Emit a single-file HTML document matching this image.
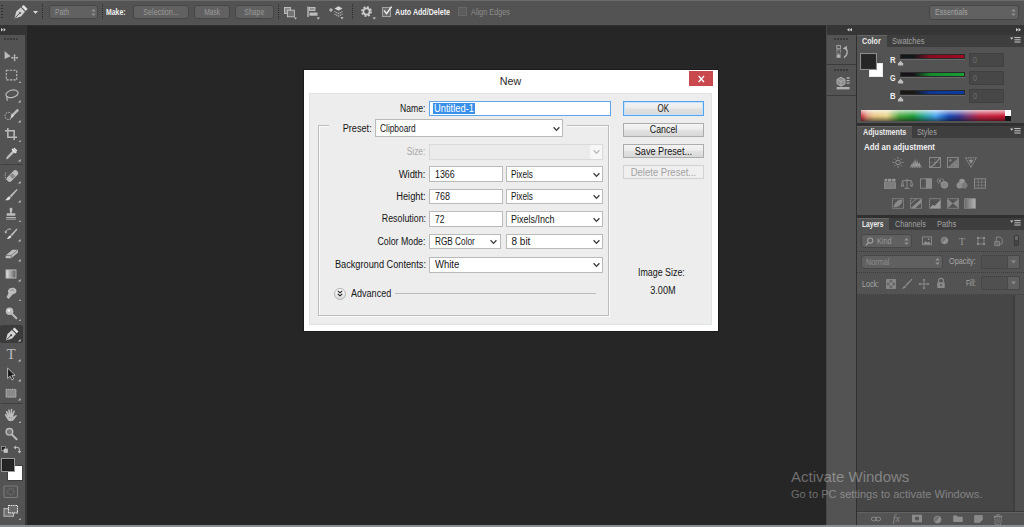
<!DOCTYPE html>
<html lang="en">
<head>
<meta charset="utf-8">
<title>New</title>
<style>
html,body{margin:0;padding:0;}
body{width:1024px;height:527px;overflow:hidden;background:#262626;position:relative;font-family:"Liberation Sans",sans-serif;font-size:9px;color:#d6d6d6;}
.abs{position:absolute;}
div,span{box-sizing:border-box;}
.t{white-space:pre;display:block;}
.dot{background-image:radial-gradient(circle at 1px 1px,rgba(255,255,255,.10) .6px,transparent .9px);background-size:3px 3px;}
</style>
</head>
<body>
<!-- app chrome -->
<div class="abs" style="left:0px;top:0px;width:1024px;height:24.5px;background:#535353;border-top:1px solid #6b6b6b;"></div>
<div class="abs" style="left:0px;top:24.5px;width:1024px;height:0.5px;background:#303030;"></div>
<div class="abs" style="left:0px;top:25px;width:25.2px;height:500px;background:#535353;"></div>
<div class="abs" style="left:25.2px;top:25px;width:1.8px;height:500px;background:#363636;"></div>
<div class="abs" style="left:0px;top:25px;width:27px;height:9.6px;background:#343434;"></div>
<div class="abs" style="left:825.5px;top:25px;width:1.5px;height:500px;background:#484848;"></div>
<div class="abs" style="left:827px;top:25px;width:197px;height:10px;background:#363636;"></div>
<div class="abs" style="left:827px;top:35px;width:28.5px;height:490px;background:#535353;"></div>
<div class="abs" style="left:855.5px;top:35px;width:1.5px;height:490px;background:#303030;"></div>
<div class="abs" style="left:857px;top:35px;width:167px;height:490px;background:#535353;"></div>
<div class="abs" style="left:0px;top:525px;width:1024px;height:2px;background:#8b8e90;"></div>

<!-- options bar -->
<div class="abs" style="left:1px;top:5px;width:2px;height:14px;background:repeating-linear-gradient(#2f2f2f 0 1px,transparent 1px 3px);"></div>
<svg class="abs" style="left:13px;top:4px;" width="16" height="16" viewBox="0 0 16 16"><path d="M1.5 14.5 L3.2 7.6 L7.8 3.6 L12 7.8 L8 12.4 Z" fill="#cfcfcf"/><path d="M2.2 13.8 L6.6 9.4" stroke="#535353" stroke-width="1"/><circle cx="7" cy="9" r="1.1" fill="#535353"/><path d="M8.6 2.8 L10.6 0.9 L14.6 5 L12.8 7 Z" fill="#e3e3e3"/></svg>
<svg class="abs" style="left:33.2px;top:10.8px;" width="5" height="3" viewBox="0 0 5 3"><path d="M0 0 L5 0 L2.5 3 Z" fill="#d8d8d8"/></svg>
<div class="abs" style="left:42px;top:4px;width:1px;height:16px;background:repeating-linear-gradient(#2c2c2c 0 1px,transparent 1px 2px);"></div>
<div class="abs" style="left:48.5px;top:5px;width:49.5px;height:14px;border:1px solid #464646;border-radius:3px;background:#616161;"></div>
<span class="abs t" style="left:54.6px;top:4.8px;height:14px;line-height:14px;font-size:8.5px;color:#9c9c9c;transform:scaleX(0.8);transform-origin:0 50%;">Path</span>
<svg class="abs" style="left:91px;top:8px;" width="5" height="9" viewBox="0 0 5 9"><path d="M0.3 3.4 L2.5 0.8 L4.7 3.4 Z M0.3 5.4 L2.5 8 L4.7 5.4 Z" fill="#8f8f8f"/></svg>
<div class="abs" style="left:102px;top:4px;width:1px;height:16px;background:repeating-linear-gradient(#2c2c2c 0 1px,transparent 1px 2px);"></div>
<span class="abs t" style="left:105.8px;top:4.7px;height:14px;line-height:14px;font-size:8.5px;color:#f2f2f2;font-weight:bold;transform:scaleX(0.809);transform-origin:0 50%;">Make:</span>
<div class="abs" style="left:133px;top:5.3px;width:56px;height:13.4px;border:1px solid #464646;border-radius:3px;background:#616161;"></div>
<span class="abs t" style="left:139.6px;top:5.0px;height:14px;line-height:14px;font-size:8.5px;color:#9a9a9a;transform:scaleX(0.844);transform-origin:50% 50%;">Selection...</span>
<div class="abs" style="left:194px;top:5.3px;width:35.5px;height:13.4px;border:1px solid #464646;border-radius:3px;background:#616161;"></div>
<span class="abs t" style="left:201.5px;top:5.0px;height:14px;line-height:14px;font-size:8.5px;color:#9a9a9a;transform:scaleX(0.788);transform-origin:50% 50%;">Mask</span>
<div class="abs" style="left:235px;top:5.3px;width:39px;height:13.4px;border:1px solid #464646;border-radius:3px;background:#616161;"></div>
<span class="abs t" style="left:242.2px;top:5.0px;height:14px;line-height:14px;font-size:8.5px;color:#9a9a9a;transform:scaleX(0.813);transform-origin:50% 50%;">Shape</span>
<div class="abs" style="left:278px;top:4px;width:1px;height:16px;background:repeating-linear-gradient(#2c2c2c 0 1px,transparent 1px 2px);"></div>
<svg class="abs" style="left:284px;top:7px;" width="14" height="14" viewBox="0 0 14 14"><rect x="0.5" y="0.5" width="6" height="6" fill="#8a8a8a" stroke="#c4c4c4" stroke-width="0.9"/><rect x="3.4" y="3.2" width="7" height="6.6" fill="#727272" stroke="#c4c4c4" stroke-width="0.9"/><path d="M10 10.6 L13 10.6 L11.5 12.4 Z" fill="#c4c4c4"/></svg>
<svg class="abs" style="left:307px;top:6px;" width="14" height="14" viewBox="0 0 14 14"><path d="M1 0.5 L1 11" stroke="#d0d0d0" stroke-width="1.2"/><rect x="2.5" y="1.5" width="5.5" height="3" fill="#8f8f8f" stroke="#cfcfcf" stroke-width="0.8"/><rect x="2.5" y="6.5" width="8" height="3.2" fill="#bdbdbd"/><path d="M9.6 11.5 L13 11.5 L11.3 13.5 Z" fill="#cfcfcf"/></svg>
<svg class="abs" style="left:329px;top:5px;" width="16" height="15" viewBox="0 0 16 15"><path d="M2 3 L2 7 M0 5 L4 5" stroke="#cfcfcf" stroke-width="1"/><path d="M5.5 3.5 L9.5 1.3 L13.5 3.5 L9.5 5.7 Z" fill="#d4d4d4"/><path d="M5.5 6.5 L9.5 8.7 L13.5 6.5 M5.5 9 L9.5 11.2 L13.5 9" stroke="#bdbdbd" stroke-width="1.1" fill="none" stroke-dasharray="1.3 0.7"/><path d="M11.3 12.3 L14.7 12.3 L13 14.3 Z" fill="#cfcfcf"/></svg>
<div class="abs" style="left:352px;top:4px;width:1px;height:16px;background:repeating-linear-gradient(#2c2c2c 0 1px,transparent 1px 2px);"></div>
<svg class="abs" style="left:360px;top:5px;" width="18" height="16" viewBox="0 0 18 16"><circle cx="6.5" cy="6.5" r="4.1" fill="none" stroke="#cdcdcd" stroke-width="2.6" stroke-dasharray="1.7 1.52"/><circle cx="6.5" cy="6.5" r="3.1" fill="none" stroke="#cdcdcd" stroke-width="1.7"/><path d="M12.6 12.5 L16 12.5 L14.3 14.5 Z" fill="#cfcfcf"/></svg>
<div class="abs" style="left:381.5px;top:7px;width:9.5px;height:9.5px;border:1px solid #a2a2a2;background:#6c6c6c;"></div>
<svg class="abs" style="left:382px;top:4px;" width="11" height="12" viewBox="0 0 11 12"><path d="M2 6.4 L4.6 9.6 L9.6 2.6" stroke="#f2f2f2" stroke-width="1.4" fill="none"/></svg>
<span class="abs t" style="left:395.0px;top:5.2px;height:14px;line-height:14px;font-size:8.5px;color:#f2f2f2;font-weight:bold;transform:scaleX(0.836);transform-origin:0 50%;">Auto Add/Delete</span>
<div class="abs" style="left:457.5px;top:7px;width:9px;height:9px;border:1px solid #686868;background:#5c5c5c;"></div>
<span class="abs t" style="left:471.0px;top:5.2px;height:14px;line-height:14px;font-size:8.5px;color:#8c8c8c;transform:scaleX(0.86);transform-origin:0 50%;">Align Edges</span>
<div class="abs" style="left:928.5px;top:5px;width:90.5px;height:14.5px;border:1px solid #464646;border-radius:3px;background:#616161;"></div>
<span class="abs t" style="left:934.8px;top:5.2px;height:14px;line-height:14px;font-size:8.5px;color:#a4a4a4;transform:scaleX(0.841);transform-origin:0 50%;">Essentials</span>
<svg class="abs" style="left:1011px;top:8px;" width="5" height="9" viewBox="0 0 5 9"><path d="M0.3 3.4 L2.5 0.8 L4.7 3.4 Z M0.3 5.4 L2.5 8 L4.7 5.4 Z" fill="#8f8f8f"/></svg>

<!-- toolbox -->
<svg class="abs" style="left:1px;top:28px;" width="5" height="4" viewBox="0 0 5 4"><path d="M0 0 L2.2 1.8 L0 3.6 Z M2.6 0 L4.8 1.8 L2.6 3.6 Z" fill="#d0d0d0"/></svg>
<div class="abs" style="left:4px;top:38px;width:15px;height:2px;background:repeating-linear-gradient(90deg,#3a3a3a 0 2px,transparent 2px 3px);"></div>
<svg class="abs" style="left:0px;top:47.5px;" width="26" height="16" viewBox="0 0 26 16"><path d="M4.6 3 L4.6 11 L10.6 8.2 Z" fill="#bcbcbc"/><path d="M14.6 6.6 L14.6 13 M11.4 9.8 L17.8 9.8" stroke="#bcbcbc" stroke-width="1"/><path d="M13.4 7.8 L14.6 6.2 L15.8 7.8 Z M13.4 11.8 L14.6 13.4 L15.8 11.8 Z M12.6 8.6 L11 9.8 L12.6 11 Z M16.6 8.6 L18.2 9.8 L16.6 11 Z" fill="#bcbcbc"/></svg>
<svg class="abs" style="left:0px;top:67px;" width="26" height="16" viewBox="0 0 26 16"><rect x="6.3" y="3.3" width="10.4" height="9.6" fill="none" stroke="#bcbcbc" stroke-width="1.1" stroke-dasharray="2.3 1.2"/></svg><svg class="abs" style="left:18px;top:80.6px;" width="2.6" height="2.6" viewBox="0 0 2.6 2.6"><path d="M2.6 0 L2.6 2.6 L0 2.6 Z" fill="#c8c8c8"/></svg>
<svg class="abs" style="left:0px;top:86.7px;" width="26" height="16" viewBox="0 0 26 16"><ellipse cx="12" cy="6.8" rx="6.2" ry="3.7" fill="none" stroke="#bcbcbc" stroke-width="1.2" transform="rotate(-14 12 6.8)"/><path d="M8 9.6 C6.2 10.6 6.6 12.2 7.6 13.6" fill="none" stroke="#bcbcbc" stroke-width="1.1"/></svg><svg class="abs" style="left:18px;top:100.3px;" width="2.6" height="2.6" viewBox="0 0 2.6 2.6"><path d="M2.6 0 L2.6 2.6 L0 2.6 Z" fill="#c8c8c8"/></svg>
<svg class="abs" style="left:0px;top:106.5px;" width="26" height="16" viewBox="0 0 26 16"><circle cx="8.6" cy="9" r="3.6" fill="none" stroke="#bcbcbc" stroke-width="1" stroke-dasharray="1.6 1.1"/><path d="M18.2 2.6 L11.4 9.4" stroke="#bcbcbc" stroke-width="2.4"/><path d="M12.6 7.6 L13.8 9 L9.4 12.2 Z" fill="#e6e6e6"/></svg><svg class="abs" style="left:18px;top:120.1px;" width="2.6" height="2.6" viewBox="0 0 2.6 2.6"><path d="M2.6 0 L2.6 2.6 L0 2.6 Z" fill="#c8c8c8"/></svg>
<svg class="abs" style="left:3px;top:126px;" width="16" height="16" viewBox="0 0 16 16"><g transform="translate(8 8) scale(.9) translate(-8 -8)"><path d="M4.5 1.2 L4.5 11.5 L14.8 11.5 M1.2 4.5 L11.5 4.5 L11.5 14.8" fill="none" stroke="#bcbcbc" stroke-width="1.7"/></g></svg><svg class="abs" style="left:18px;top:139.6px;" width="2.6" height="2.6" viewBox="0 0 2.6 2.6"><path d="M2.6 0 L2.6 2.6 L0 2.6 Z" fill="#c8c8c8"/></svg>
<svg class="abs" style="left:3px;top:145.7px;" width="16" height="16" viewBox="0 0 16 16"><g transform="translate(8 8) scale(.9) translate(-8 -8)"><path d="M10.6 3.4 L12.6 5.4 L5.2 12.8 L2.4 14 L3.4 11 Z" fill="#bcbcbc"/><path d="M10 1.6 L14.4 6 L12.6 7.4 L8.6 3.4 Z" fill="#e6e6e6"/><path d="M12 1 L15 4 L14 5.4 L10.6 2 Z" fill="#e6e6e6"/></g></svg><svg class="abs" style="left:18px;top:159.29999999999998px;" width="2.6" height="2.6" viewBox="0 0 2.6 2.6"><path d="M2.6 0 L2.6 2.6 L0 2.6 Z" fill="#c8c8c8"/></svg>
<div class="abs" style="left:1px;top:163.8px;width:22px;height:1px;background:repeating-linear-gradient(90deg,#383838 0 1px,#484848 1px 2px);"></div>
<svg class="abs" style="left:3px;top:167.8px;" width="16" height="16" viewBox="0 0 16 16"><g transform="translate(8 8) scale(.9) translate(-8 -8)"><g transform="rotate(-45 9.6 8)"><rect x="2" y="4.8" width="15.2" height="6.4" rx="3" fill="#bcbcbc"/><rect x="7.4" y="5.6" width="4.4" height="4.8" fill="#8a8a8a"/></g><path d="M2.2 4.2 C1 7 1.4 10 3 12.4" fill="none" stroke="#bcbcbc" stroke-width="0.9" stroke-dasharray="1.4 1"/></g></svg><svg class="abs" style="left:18px;top:181.4px;" width="2.6" height="2.6" viewBox="0 0 2.6 2.6"><path d="M2.6 0 L2.6 2.6 L0 2.6 Z" fill="#c8c8c8"/></svg>
<svg class="abs" style="left:3px;top:186.8px;" width="16" height="16" viewBox="0 0 16 16"><g transform="translate(8 8) scale(.9) translate(-8 -8)"><path d="M14.4 1.2 L15.4 2.2 L8.4 10.4 L6.6 8.8 Z" fill="#bcbcbc"/><path d="M6.2 9.4 L7.8 11 C6.8 13.4 4.2 14.4 1.4 13.8 C3.4 12.8 3.6 10.4 6.2 9.4 Z" fill="#dedede"/></g></svg><svg class="abs" style="left:18px;top:200.4px;" width="2.6" height="2.6" viewBox="0 0 2.6 2.6"><path d="M2.6 0 L2.6 2.6 L0 2.6 Z" fill="#c8c8c8"/></svg>
<svg class="abs" style="left:3px;top:206px;" width="16" height="16" viewBox="0 0 16 16"><g transform="translate(8 8) scale(.9) translate(-8 -8)"><path d="M6.4 2.6 C6.4 0.6 9.6 0.6 9.6 2.6 C9.6 4.4 8.8 5.2 8.8 7.2 L12.8 7.2 L12.8 10 L3.2 10 L3.2 7.2 L7.2 7.2 C7.2 5.2 6.4 4.4 6.4 2.6 Z" fill="#bcbcbc"/><rect x="2.6" y="11.4" width="10.8" height="1.4" fill="#bcbcbc"/><rect x="2.6" y="13.6" width="10.8" height="0.9" fill="#9a9a9a"/></g></svg><svg class="abs" style="left:18px;top:219.6px;" width="2.6" height="2.6" viewBox="0 0 2.6 2.6"><path d="M2.6 0 L2.6 2.6 L0 2.6 Z" fill="#c8c8c8"/></svg>
<svg class="abs" style="left:3px;top:225.8px;" width="16" height="16" viewBox="0 0 16 16"><g transform="translate(8 8) scale(.9) translate(-8 -8)"><path d="M14.2 2 L15.2 3 L9.2 10.2 L7.6 8.8 Z" fill="#bcbcbc"/><path d="M7.2 9.4 L8.6 10.8 C7.8 13 5.6 13.8 3.2 13.4 C4.8 12.4 5 10.4 7.2 9.4 Z" fill="#dedede"/><path d="M2 6.2 C2.4 3.4 5 2 8 2.6" fill="none" stroke="#bcbcbc" stroke-width="1.1"/><path d="M0.6 5 L2 7.8 L4 5.4 Z" fill="#bcbcbc"/></g></svg><svg class="abs" style="left:18px;top:239.4px;" width="2.6" height="2.6" viewBox="0 0 2.6 2.6"><path d="M2.6 0 L2.6 2.6 L0 2.6 Z" fill="#c8c8c8"/></svg>
<svg class="abs" style="left:3px;top:245.6px;" width="16" height="16" viewBox="0 0 16 16"><g transform="translate(8 8) scale(.9) translate(-8 -8)"><path d="M2 9.6 L9.6 3.2 L15.8 3.2 L15.8 6.4 L8.2 12.8 L2 12.8 Z" fill="#bcbcbc"/><path d="M2 9.6 L8.2 9.6 L8.2 12.8 M8.2 9.6 L15.8 3.2" fill="none" stroke="#6a6a6a" stroke-width="0.9"/></g></svg><svg class="abs" style="left:18px;top:259.2px;" width="2.6" height="2.6" viewBox="0 0 2.6 2.6"><path d="M2.6 0 L2.6 2.6 L0 2.6 Z" fill="#c8c8c8"/></svg>
<svg class="abs" style="left:3px;top:265.6px;" width="16" height="16" viewBox="0 0 16 16"><g transform="translate(8 8) scale(.9) translate(-8 -8)"><defs><linearGradient id="gt" x1="0" x2="1"><stop offset="0" stop-color="#e4e4e4"/><stop offset="1" stop-color="#5a5a5a"/></linearGradient></defs><rect x="2.5" y="3.5" width="11" height="9" fill="url(#gt)" stroke="#bcbcbc" stroke-width="1"/></g></svg><svg class="abs" style="left:18px;top:279.20000000000005px;" width="2.6" height="2.6" viewBox="0 0 2.6 2.6"><path d="M2.6 0 L2.6 2.6 L0 2.6 Z" fill="#c8c8c8"/></svg>
<svg class="abs" style="left:3px;top:285.3px;" width="16" height="16" viewBox="0 0 16 16"><g transform="translate(8 8) scale(.9) translate(-8 -8)"><path d="M5.2 8.4 C3.6 5 6 2.4 9.2 2.2 C12.4 2 14.6 4 14 6.6 C13.6 8.4 11.6 9 10 9.4 L5.4 14.6 L3 12.6 Z" fill="#bcbcbc"/><path d="M7.4 5.2 C8.8 4.2 10.8 4.4 11.6 5.6" fill="none" stroke="#777" stroke-width="0.9"/></g></svg><svg class="abs" style="left:18px;top:298.90000000000003px;" width="2.6" height="2.6" viewBox="0 0 2.6 2.6"><path d="M2.6 0 L2.6 2.6 L0 2.6 Z" fill="#c8c8c8"/></svg>
<svg class="abs" style="left:3px;top:305px;" width="16" height="16" viewBox="0 0 16 16"><g transform="translate(8 8) scale(.9) translate(-8 -8)"><circle cx="6.4" cy="6" r="4.2" fill="#bcbcbc"/><circle cx="5.6" cy="5.2" r="1.5" fill="#efefef"/><path d="M9.6 9.4 L14 13.8" stroke="#bcbcbc" stroke-width="2.1" stroke-linecap="round"/></g></svg><svg class="abs" style="left:18px;top:318.6px;" width="2.6" height="2.6" viewBox="0 0 2.6 2.6"><path d="M2.6 0 L2.6 2.6 L0 2.6 Z" fill="#c8c8c8"/></svg>
<div class="abs" style="left:0px;top:325px;width:22.8px;height:17.6px;background:#3b3b3b;border-radius:2px;"></div>
<svg class="abs" style="left:0px;top:325.8px;" width="26" height="16" viewBox="0 0 26 16"><g transform="translate(4.4 0.6) scale(.96)"><path d="M1.5 14.5 L3.2 7.6 L7.8 3.6 L12 7.8 L8 12.4 Z" fill="#d2d2d2"/><path d="M2.2 13.8 L6.6 9.4" stroke="#3a3a3a" stroke-width="1"/><circle cx="7" cy="9" r="1.1" fill="#3a3a3a"/><path d="M8.6 2.8 L10.6 0.9 L14.6 5 L12.8 7 Z" fill="#e4e4e4"/></g></svg><svg class="abs" style="left:18px;top:339.40000000000003px;" width="2.6" height="2.6" viewBox="0 0 2.6 2.6"><path d="M2.6 0 L2.6 2.6 L0 2.6 Z" fill="#c8c8c8"/></svg>
<svg class="abs" style="left:3px;top:345.8px;" width="16" height="16" viewBox="0 0 16 16"><text x="8" y="13.2" text-anchor="middle" font-family="Liberation Serif, serif" font-size="15" fill="#bcbcbc">T</text></svg><svg class="abs" style="left:18px;top:359.40000000000003px;" width="2.6" height="2.6" viewBox="0 0 2.6 2.6"><path d="M2.6 0 L2.6 2.6 L0 2.6 Z" fill="#c8c8c8"/></svg>
<svg class="abs" style="left:3px;top:365.6px;" width="16" height="16" viewBox="0 0 16 16"><g transform="translate(8 8) scale(.9) translate(-8 -8)"><path d="M4.2 1.4 L4.2 13 L7 10.4 L9 14.6 L11 13.6 L9 9.6 L12.6 9.4 Z" fill="#1c1c1c" stroke="#d0d0d0" stroke-width="0.9"/></g></svg><svg class="abs" style="left:18px;top:379.20000000000005px;" width="2.6" height="2.6" viewBox="0 0 2.6 2.6"><path d="M2.6 0 L2.6 2.6 L0 2.6 Z" fill="#c8c8c8"/></svg>
<svg class="abs" style="left:3px;top:384.5px;" width="16" height="16" viewBox="0 0 16 16"><g transform="translate(8 8) scale(.9) translate(-8 -8)"><rect x="2.5" y="4" width="11" height="8.6" fill="#8a8a8a" stroke="#bcbcbc" stroke-width="1" stroke-dasharray="1.5 0.6"/></g></svg><svg class="abs" style="left:18px;top:398.1px;" width="2.6" height="2.6" viewBox="0 0 2.6 2.6"><path d="M2.6 0 L2.6 2.6 L0 2.6 Z" fill="#c8c8c8"/></svg>
<div class="abs" style="left:1px;top:402.8px;width:22px;height:1px;background:#404040;"></div>
<svg class="abs" style="left:0px;top:406.9px;" width="26" height="16" viewBox="0 0 26 16"><path d="M7.6 9 L6 5.2 C5.6 4.2 7 3.6 7.4 4.6 L8.6 7.2 L8.2 3.2 C8.1 2.1 9.6 2 9.7 3.1 L10.2 6.8 L10.8 2.6 C11 1.5 12.5 1.7 12.3 2.8 L11.9 7 L13.4 3.9 C13.9 2.9 15.2 3.5 14.8 4.5 L13.4 8.6 L13.6 10 L15.4 8.2 C16.2 7.4 17.3 8.4 16.6 9.2 L14 12.6 C13.2 13.8 12.2 14.2 10.8 14.2 C9 14.2 8 13.4 7.4 12.2 L5 8.2 C4.5 7.2 5.8 6.6 6.4 7.4 Z" fill="#bcbcbc"/><circle cx="9.6" cy="10.6" r="0.6" fill="#7a7a7a"/><circle cx="11.8" cy="10.8" r="0.6" fill="#7a7a7a"/></svg><svg class="abs" style="left:18px;top:420.5px;" width="2.6" height="2.6" viewBox="0 0 2.6 2.6"><path d="M2.6 0 L2.6 2.6 L0 2.6 Z" fill="#c8c8c8"/></svg>
<svg class="abs" style="left:0px;top:425px;" width="26" height="16" viewBox="0 0 26 16"><circle cx="9.4" cy="6.8" r="3.3" fill="#777" stroke="#bcbcbc" stroke-width="1.4"/><path d="M12 9.6 L16.6 14.2" stroke="#bcbcbc" stroke-width="2" stroke-linecap="round"/></svg>
<svg class="abs" style="left:0.8px;top:446px;" width="8" height="8" viewBox="0 0 8 8"><rect x="0.4" y="0.4" width="4.2" height="4.2" fill="#1c1c1c" stroke="#a8a8a8" stroke-width="0.7"/><rect x="2.6" y="2.6" width="4.2" height="4.2" fill="#c4c4c4"/></svg>
<svg class="abs" style="left:13.4px;top:445.4px;" width="9" height="9" viewBox="0 0 9 9"><path d="M2 2.4 C5.4 1.6 7 3.2 6.4 6.6" fill="none" stroke="#bcbcbc" stroke-width="1.1"/><path d="M0.4 2.6 L3 0.6 L3 4.6 Z M4.6 6 L8.4 6 L6.4 8.6 Z" fill="#bcbcbc"/></svg>
<div class="abs" style="left:8.2px;top:466.3px;width:13.4px;height:13.4px;background:#fff;box-shadow:0 0 0 0.8px #3c3c3c;"></div>
<div class="abs" style="left:1.5px;top:458.8px;width:12.2px;height:12.4px;background:#252525;border:1px solid #1e1e1e;box-shadow:0 0 0 1px #9a9a9a;"></div>
<svg class="abs" style="left:3.4px;top:485px;" width="16" height="14" viewBox="0 0 16 14"><rect x="1" y="1" width="13.5" height="11.5" rx="1" fill="none" stroke="#7b7b7b" stroke-width="1.1"/><circle cx="7.8" cy="6.8" r="3.2" fill="none" stroke="#7b7b7b" stroke-width="1" stroke-dasharray="1.5 1"/></svg>
<svg class="abs" style="left:3px;top:504px;" width="18" height="14" viewBox="0 0 18 14"><rect x="1" y="4.6" width="9.5" height="7.6" fill="#6e6e6e" stroke="#bdbdbd" stroke-width="1"/><rect x="5.5" y="1.5" width="9" height="7.4" fill="#6a6a6a" stroke="#e0e0e0" stroke-width="1.1" stroke-dasharray="1.6 0.7"/></svg><svg class="abs" style="left:18px;top:517.6px;" width="2.6" height="2.6" viewBox="0 0 2.6 2.6"><path d="M2.6 0 L2.6 2.6 L0 2.6 Z" fill="#c8c8c8"/></svg>

<!-- panels -->
<svg class="abs" style="left:846.6px;top:28px;" width="5.2" height="3.6" viewBox="0 0 5.2 3.6"><path d="M2.4 0 L0 1.8 L2.4 3.6 Z M5 0 L2.6 1.8 L5 3.6 Z" fill="#d0d0d0"/></svg>
<svg class="abs" style="left:1016px;top:28px;" width="5.2" height="3.6" viewBox="0 0 5.2 3.6"><path d="M0 0 L2.4 1.8 L0 3.6 Z M2.6 0 L5 1.8 L2.6 3.6 Z" fill="#d0d0d0"/></svg>
<div class="abs" style="left:834px;top:38px;width:15px;height:2px;background:repeating-linear-gradient(90deg,#3a3a3a 0 2px,transparent 2px 3px);"></div>
<svg class="abs" style="left:836px;top:45px;" width="15" height="14" viewBox="0 0 15 14"><rect x="0.8" y="0.6" width="3.6" height="3.2" fill="none" stroke="#b0b0b0" stroke-width="0.9"/><rect x="0.8" y="5" width="3.6" height="3.2" fill="none" stroke="#b0b0b0" stroke-width="0.9" stroke-dasharray="1 0.6"/><rect x="0.6" y="9.4" width="4" height="3.4" fill="#b0b0b0"/><path d="M8 12.6 C11.4 10.4 12.4 6.4 9.6 2.8" fill="none" stroke="#b0b0b0" stroke-width="1.5"/><path d="M6.6 3.6 L10.8 0.8 L11 5.2 Z" fill="#b0b0b0"/></svg>
<div class="abs" style="left:827px;top:64px;width:28.5px;height:1px;background:#3b3b3b;"></div>
<div class="abs" style="left:834px;top:69px;width:15px;height:2px;background:repeating-linear-gradient(90deg,#3a3a3a 0 2px,transparent 2px 3px);"></div>
<svg class="abs" style="left:835.6px;top:76px;" width="15" height="14" viewBox="0 0 15 14"><path d="M1 3.4 L5 1.2 L9 3.4 L9 8 L5 10.2 L1 8 Z" fill="#8c8c8c" stroke="#b0b0b0" stroke-width="0.9"/><path d="M1 3.4 L5 5.6 L9 3.4 M5 5.6 L5 10.2" fill="none" stroke="#b0b0b0" stroke-width="0.8"/><path d="M10.6 2 L13.6 2 M10.6 4.6 L13.6 4.6 M10.6 7.2 L13.6 7.2" stroke="#b0b0b0" stroke-width="1.3"/><rect x="0.6" y="11" width="13" height="2.4" fill="#b0b0b0"/></svg>
<div class="abs" style="left:827px;top:94.6px;width:28.5px;height:1px;background:#3b3b3b;"></div>
<div class="abs" style="left:857px;top:35px;width:167px;height:12px;background:#3e3e3e;"></div>
<div class="abs" style="left:857px;top:35px;width:30px;height:12.5px;background:#535353;border-top:1px solid #666;"></div>
<span class="abs t" style="left:862.3px;top:34.0px;height:14px;line-height:14px;font-size:8.5px;color:#ececec;font-weight:bold;transform:scaleX(0.842);transform-origin:0 50%;">Color</span>
<span class="abs t" style="left:892.3px;top:34.0px;height:14px;line-height:14px;font-size:8.5px;color:#a2a2a2;transform:scaleX(0.879);transform-origin:0 50%;">Swatches</span>
<svg class="abs" style="left:1010.3px;top:37.4px;" width="11" height="7" viewBox="0 0 11 7"><path d="M0 0.6 L3.4 0.6 L1.7 2.8 Z" fill="#c8c8c8"/><path d="M4.4 0.6 L10.6 0.6 M4.4 2.8 L10.6 2.8 M4.4 5 L10.6 5" stroke="#c8c8c8" stroke-width="1"/></svg>
<div class="abs" style="left:868.5px;top:62.5px;width:14.5px;height:14px;background:#fff;border:1px solid #e9e9e9;"></div>
<div class="abs" style="left:861px;top:54.3px;width:15px;height:14.6px;background:#262626;border:1px solid #2b2b2b;box-shadow:0 0 0 1px #8d8d8d;"></div>
<span class="abs t" style="left:889.6px;top:53.0px;height:14px;line-height:14px;font-size:8.5px;color:#efefef;font-weight:bold;transform:scaleX(0.912);transform-origin:0 50%;">R</span>
<div class="abs" style="left:900px;top:54.2px;width:65px;height:5px;border:1px solid #2a2a2a;background:linear-gradient(90deg,#12181a 0%,#12181a 20%,#8a0a20 46%,#9e0a24 100%);box-shadow:0 1px 0 #6a6a6a;"></div>
<svg class="abs" style="left:897.3px;top:59.800000000000004px;" width="7.2" height="6.4" viewBox="0 0 7.2 6.4"><path d="M3.6 0.3 L6.7 3.4 L6.7 5.9 L0.5 5.9 L0.5 3.4 Z" fill="#bdbdbd" stroke="#3e3e3e" stroke-width="0.7"/></svg>
<div class="abs" style="left:968.8px;top:53.0px;width:35.5px;height:14.2px;background:#474747;border:1px solid #404040;border-radius:1px;"></div>
<span class="abs t" style="left:973.0px;top:53.2px;height:14px;line-height:14px;font-size:8.5px;color:#6c6c6c;transform:scaleX(0.845);transform-origin:0 50%;">0</span>
<span class="abs t" style="left:889.6px;top:71.2px;height:14px;line-height:14px;font-size:8.5px;color:#efefef;font-weight:bold;transform:scaleX(0.845);transform-origin:0 50%;">G</span>
<div class="abs" style="left:900px;top:72.39999999999999px;width:65px;height:5px;border:1px solid #2a2a2a;background:linear-gradient(90deg,#18121a 0%,#18121a 20%,#158a2c 46%,#16a034 100%);box-shadow:0 1px 0 #6a6a6a;"></div>
<svg class="abs" style="left:897.3px;top:78.0px;" width="7.2" height="6.4" viewBox="0 0 7.2 6.4"><path d="M3.6 0.3 L6.7 3.4 L6.7 5.9 L0.5 5.9 L0.5 3.4 Z" fill="#bdbdbd" stroke="#3e3e3e" stroke-width="0.7"/></svg>
<div class="abs" style="left:968.8px;top:71.2px;width:35.5px;height:14.2px;background:#474747;border:1px solid #404040;border-radius:1px;"></div>
<span class="abs t" style="left:973.0px;top:71.4px;height:14px;line-height:14px;font-size:8.5px;color:#6c6c6c;transform:scaleX(0.845);transform-origin:0 50%;">0</span>
<span class="abs t" style="left:889.6px;top:89.2px;height:14px;line-height:14px;font-size:8.5px;color:#efefef;font-weight:bold;transform:scaleX(0.912);transform-origin:0 50%;">B</span>
<div class="abs" style="left:900px;top:90.39999999999999px;width:65px;height:5px;border:1px solid #2a2a2a;background:linear-gradient(90deg,#1a1812 0%,#1a1812 20%,#0c3690 46%,#0c3ca4 100%);box-shadow:0 1px 0 #6a6a6a;"></div>
<svg class="abs" style="left:897.3px;top:96.0px;" width="7.2" height="6.4" viewBox="0 0 7.2 6.4"><path d="M3.6 0.3 L6.7 3.4 L6.7 5.9 L0.5 5.9 L0.5 3.4 Z" fill="#bdbdbd" stroke="#3e3e3e" stroke-width="0.7"/></svg>
<div class="abs" style="left:968.8px;top:89.2px;width:35.5px;height:14.2px;background:#474747;border:1px solid #404040;border-radius:1px;"></div>
<span class="abs t" style="left:973.0px;top:89.4px;height:14px;line-height:14px;font-size:8.5px;color:#6c6c6c;transform:scaleX(0.845);transform-origin:0 50%;">0</span>
<div class="abs" style="left:861px;top:110px;width:144px;height:11px;background:linear-gradient(180deg,rgba(255,255,255,.72) 0%,rgba(255,255,255,.25) 35%,rgba(0,0,0,0) 55%,rgba(0,0,0,.5) 100%),linear-gradient(90deg,#d03044 0%,#e0987a 4%,#e8c886 9%,#e8d48a 18%,#4aa840 27%,#22a03a 36%,#2ea8a0 44%,#48a4f0 52%,#1c4cb8 61%,#3a3a98 68%,#7a3a78 74%,#c02848 82%,#cc1c34 100%);"></div>
<div class="abs" style="left:1005px;top:110px;width:6px;height:5.5px;background:#fff;"></div>
<div class="abs" style="left:1005px;top:115.5px;width:6px;height:5.5px;background:#161616;"></div>
<div class="abs" style="left:857px;top:123px;width:167px;height:3px;background:#303030;"></div>
<div class="abs" style="left:857px;top:125.7px;width:167px;height:12px;background:#3e3e3e;"></div>
<div class="abs" style="left:857px;top:125.7px;width:55px;height:12.5px;background:#535353;border-top:1px solid #666;"></div>
<span class="abs t" style="left:862.7px;top:124.7px;height:14px;line-height:14px;font-size:8.5px;color:#ececec;font-weight:bold;transform:scaleX(0.841);transform-origin:0 50%;">Adjustments</span>
<span class="abs t" style="left:917.4px;top:124.7px;height:14px;line-height:14px;font-size:8.5px;color:#a2a2a2;transform:scaleX(0.855);transform-origin:0 50%;">Styles</span>
<svg class="abs" style="left:1010.3px;top:128.1px;" width="11" height="7" viewBox="0 0 11 7"><path d="M0 0.6 L3.4 0.6 L1.7 2.8 Z" fill="#c8c8c8"/><path d="M4.4 0.6 L10.6 0.6 M4.4 2.8 L10.6 2.8 M4.4 5 L10.6 5" stroke="#c8c8c8" stroke-width="1"/></svg>
<span class="abs t" style="left:864.0px;top:139.7px;height:14px;line-height:14px;font-size:8.5px;color:#f0f0f0;font-weight:bold;transform:scaleX(0.928);transform-origin:0 50%;">Add an adjustment</span>
<svg class="abs" style="left:891px;top:155.8px;" width="14" height="13" viewBox="0 0 14 13"><g transform="translate(7.0 6.5) scale(0.88) translate(-7.0 -6.5)"><circle cx="7" cy="6.5" r="2.6" fill="none" stroke="#959595" stroke-width="1.1"/><path d="M7 0.4 L7 2.4 M7 10.6 L7 12.6 M0.8 6.5 L2.8 6.5 M11.2 6.5 L13.2 6.5 M2.6 2.1 L4 3.5 M10 9.5 L11.4 10.9 M2.6 10.9 L4 9.5 M10 3.5 L11.4 2.1" stroke="#959595" stroke-width="1"/></g></svg>
<svg class="abs" style="left:909.2px;top:155.8px;" width="14" height="13" viewBox="0 0 14 13"><g transform="translate(7.0 6.5) scale(0.88) translate(-7.0 -6.5)"><path d="M0.6 11.4 L1.6 8 L2.6 9.6 L3.8 4.6 L4.8 8.4 L6 2 L7.2 7.4 L8.4 3.6 L9.6 8.6 L10.8 5.8 L12 9.2 L13.4 11.4 Z" fill="#959595"/><path d="M0.4 12.2 L13.6 12.2" stroke="#959595" stroke-width="0.9" stroke-dasharray="1.2 0.8"/></g></svg>
<svg class="abs" style="left:927.5px;top:155.8px;" width="14" height="13" viewBox="0 0 14 13"><g transform="translate(7.0 6.5) scale(0.88) translate(-7.0 -6.5)"><rect x="0.8" y="0.8" width="12.4" height="11.4" fill="none" stroke="#959595" stroke-width="0.9"/><path d="M0.8 6.5 L13.2 6.5 M7 0.8 L7 12.2" stroke="#959595" stroke-width="0.6" stroke-dasharray="1 0.8"/><path d="M1.2 11.6 C5.4 10.8 8 6 12.8 1.4" fill="none" stroke="#959595" stroke-width="1.2"/></g></svg>
<svg class="abs" style="left:945.6px;top:155.8px;" width="14" height="13" viewBox="0 0 14 13"><g transform="translate(7.0 6.5) scale(0.88) translate(-7.0 -6.5)"><rect x="0.8" y="0.8" width="12.4" height="11.4" fill="none" stroke="#959595" stroke-width="0.9"/><path d="M0.8 12.2 L13.2 0.8 L13.2 12.2 Z" fill="#7c7c7c"/><path d="M2.4 4 L5.6 4 M4 2.4 L4 5.6 M8.4 9.4 L11.4 9.4" stroke="#959595" stroke-width="0.9"/></g></svg>
<svg class="abs" style="left:963.8px;top:155.8px;" width="14" height="13" viewBox="0 0 14 13"><g transform="translate(7.0 6.5) scale(0.88) translate(-7.0 -6.5)"><path d="M0.8 1.2 L13.2 1.2 L7 12 Z" fill="none" stroke="#959595" stroke-width="1.1" stroke-dasharray="2 0.7"/><path d="M4.2 3.4 L9.8 3.4 L7 8.2 Z" fill="#959595"/></g></svg>
<svg class="abs" style="left:882.6px;top:176.5px;" width="14" height="13" viewBox="0 0 14 13"><g transform="translate(7.0 6.5) scale(0.88) translate(-7.0 -6.5)"><rect x="0.8" y="1.2" width="12.4" height="3.2" fill="#959595"/><rect x="0.8" y="5.6" width="12.4" height="6.4" fill="#7e7e7e" stroke="#959595" stroke-width="0.8"/><path d="M4 1 L4 5 M9 1 L9 5" stroke="#535353" stroke-width="0.8"/></g></svg>
<svg class="abs" style="left:900px;top:176.5px;" width="14" height="13" viewBox="0 0 14 13"><g transform="translate(7.0 6.5) scale(0.88) translate(-7.0 -6.5)"><path d="M7 1 L7 11.6 M1.8 3.2 L12.2 3.2 M4 12 L10 12" stroke="#959595" stroke-width="1"/><path d="M0.4 8.6 L1.8 3.6 L3.4 8.6 Z M10.6 8.6 L12.2 3.6 L13.6 8.6 Z" fill="none" stroke="#959595" stroke-width="0.8"/><path d="M0.2 8.8 C0.6 10.6 3.2 10.6 3.6 8.8 Z M10.4 8.8 C10.8 10.6 13.4 10.6 13.8 8.8 Z" fill="#959595"/></g></svg>
<svg class="abs" style="left:918.5px;top:176.5px;" width="14" height="13" viewBox="0 0 14 13"><g transform="translate(7.0 6.5) scale(0.88) translate(-7.0 -6.5)"><rect x="0.8" y="1.2" width="12.4" height="10.6" fill="none" stroke="#959595" stroke-width="0.9"/><rect x="7" y="1.2" width="6.2" height="10.6" fill="#8a8a8a" stroke="#959595" stroke-width="0.6" stroke-dasharray="1 0.7"/></g></svg>
<svg class="abs" style="left:936.4px;top:176.5px;" width="14" height="13" viewBox="0 0 14 13"><g transform="translate(7.0 6.5) scale(0.88) translate(-7.0 -6.5)"><rect x="0.6" y="1.4" width="7" height="4.6" rx="0.8" fill="none" stroke="#959595" stroke-width="0.9" stroke-dasharray="1.4 0.7"/><circle cx="8.6" cy="8" r="3.8" fill="#868686" stroke="#959595" stroke-width="1"/><circle cx="3.4" cy="3.6" r="1.2" fill="#959595"/></g></svg>
<svg class="abs" style="left:954.6px;top:176.5px;" width="14" height="13" viewBox="0 0 14 13"><g transform="translate(7.0 6.5) scale(0.88) translate(-7.0 -6.5)"><circle cx="7" cy="4.4" r="3.3" fill="#959595"/><circle cx="4.4" cy="8.6" r="3.3" fill="#8f8f8f" stroke="#959595" stroke-width="0.7"/><circle cx="9.6" cy="8.6" r="3.3" fill="#7a7a7a" stroke="#959595" stroke-width="0.7" stroke-dasharray="1 0.6"/></g></svg>
<svg class="abs" style="left:972.6px;top:176.5px;" width="14" height="13" viewBox="0 0 14 13"><g transform="translate(7.0 6.5) scale(0.88) translate(-7.0 -6.5)"><rect x="0.8" y="1.2" width="12.4" height="10.6" fill="none" stroke="#959595" stroke-width="0.9"/><path d="M0.8 4.8 L13.2 4.8 M0.8 8.4 L13.2 8.4 M5 1.2 L5 11.8 M9 1.2 L9 11.8" stroke="#959595" stroke-width="0.8" stroke-dasharray="1.2 0.6"/></g></svg>
<svg class="abs" style="left:891.3px;top:196.5px;" width="14" height="13" viewBox="0 0 14 13"><g transform="translate(7.0 6.5) scale(0.88) translate(-7.0 -6.5)"><rect x="0.8" y="1" width="12.4" height="11" fill="none" stroke="#959595" stroke-width="1" stroke-dasharray="1.6 0.6"/><path d="M2.6 10.4 C3.4 5.4 7 2.6 11.4 2.6 C11.4 7 8 10.4 2.6 10.4 Z" fill="#8a8a8a" stroke="#959595" stroke-width="0.8"/></g></svg>
<svg class="abs" style="left:909.4px;top:196.5px;" width="14" height="13" viewBox="0 0 14 13"><g transform="translate(7.0 6.5) scale(0.88) translate(-7.0 -6.5)"><rect x="0.8" y="1" width="12.4" height="11" fill="none" stroke="#959595" stroke-width="1" stroke-dasharray="1.6 0.6"/><path d="M0.8 12 L13.2 1 L13.2 5.4 L6 12 Z" fill="#8e8e8e"/><path d="M0.8 7 L7.6 1" stroke="#959595" stroke-width="0.9"/></g></svg>
<svg class="abs" style="left:927.5px;top:196.5px;" width="14" height="13" viewBox="0 0 14 13"><g transform="translate(7.0 6.5) scale(0.88) translate(-7.0 -6.5)"><rect x="0.8" y="1" width="12.4" height="11" fill="none" stroke="#959595" stroke-width="1" stroke-dasharray="1.6 0.6"/><path d="M1 11.8 L4.6 8 L6.4 9.4 L13 2.6 L13 11.8 Z" fill="#9a9a9a"/></g></svg>
<svg class="abs" style="left:945.6px;top:196.5px;" width="14" height="13" viewBox="0 0 14 13"><g transform="translate(7.0 6.5) scale(0.88) translate(-7.0 -6.5)"><rect x="0.8" y="1" width="12.4" height="11" fill="none" stroke="#959595" stroke-width="1" stroke-dasharray="1.6 0.6"/><path d="M0.8 1 L7 6.5 L0.8 12 Z M13.2 1 L7 6.5 L13.2 12 Z" fill="#868686"/></g></svg>
<svg class="abs" style="left:963.4px;top:196.5px;" width="14" height="13" viewBox="0 0 14 13"><g transform="translate(7.0 6.5) scale(0.88) translate(-7.0 -6.5)"><defs><linearGradient id="ga" x1="0" x2="1"><stop offset="0" stop-color="#6a6a6a"/><stop offset="1" stop-color="#b4b4b4"/></linearGradient></defs><rect x="0.8" y="1" width="12.4" height="11" fill="url(#ga)" stroke="#959595" stroke-width="1" stroke-dasharray="1.6 0.6"/></g></svg>
<div class="abs" style="left:857px;top:214.5px;width:167px;height:3px;background:#303030;"></div>
<div class="abs" style="left:857px;top:217.5px;width:167px;height:12px;background:#3e3e3e;"></div>
<div class="abs" style="left:857px;top:217.5px;width:32px;height:12.5px;background:#535353;border-top:1px solid #666;"></div>
<span class="abs t" style="left:862.3px;top:216.5px;height:14px;line-height:14px;font-size:8.5px;color:#ececec;font-weight:bold;transform:scaleX(0.78);transform-origin:0 50%;">Layers</span>
<span class="abs t" style="left:894.6px;top:216.5px;height:14px;line-height:14px;font-size:8.5px;color:#a2a2a2;transform:scaleX(0.857);transform-origin:0 50%;">Channels</span>
<span class="abs t" style="left:937.4px;top:216.5px;height:14px;line-height:14px;font-size:8.5px;color:#a2a2a2;transform:scaleX(0.883);transform-origin:0 50%;">Paths</span>
<svg class="abs" style="left:1010.3px;top:219.9px;" width="11" height="7" viewBox="0 0 11 7"><path d="M0 0.6 L3.4 0.6 L1.7 2.8 Z" fill="#c8c8c8"/><path d="M4.4 0.6 L10.6 0.6 M4.4 2.8 L10.6 2.8 M4.4 5 L10.6 5" stroke="#c8c8c8" stroke-width="1"/></svg>
<div class="abs" style="left:861px;top:234.4px;width:50.7px;height:13.4px;border:1px solid #474747;border-radius:3px;background:#606060;"></div>
<svg class="abs" style="left:865px;top:236.5px;" width="9" height="9" viewBox="0 0 9 9"><circle cx="5.2" cy="3.6" r="2.6" fill="none" stroke="#a0a0a0" stroke-width="1.1"/><path d="M3.4 5.6 L0.8 8.4" stroke="#a0a0a0" stroke-width="1.3"/></svg>
<span class="abs t" style="left:877.0px;top:234.2px;height:14px;line-height:14px;font-size:8.5px;color:#9c9c9c;transform:scaleX(0.852);transform-origin:0 50%;">Kind</span>
<svg class="abs" style="left:904px;top:236.8px;" width="5" height="9" viewBox="0 0 5 9"><path d="M0.3 3.4 L2.5 0.8 L4.7 3.4 Z M0.3 5.4 L2.5 8 L4.7 5.4 Z" fill="#929292"/></svg>
<svg class="abs" style="left:920.5px;top:235px;" width="12" height="12" viewBox="0 0 12 12"><g transform="translate(6.0 6.0) scale(0.85) translate(-6.0 -6.0)"><rect x="0.8" y="1.2" width="10.4" height="9.2" fill="none" stroke="#919191" stroke-width="1"/><path d="M1.4 9.6 L4.4 6 L6.4 8 L8 6.6 L10.6 9.6 Z" fill="#919191"/><circle cx="8" cy="3.8" r="1" fill="#919191"/></g></svg>
<svg class="abs" style="left:938.5px;top:235.4px;" width="11" height="11" viewBox="0 0 11 11"><g transform="translate(5.5 5.5) scale(0.78) translate(-5.5 -5.5)"><circle cx="5.5" cy="5.5" r="4.2" fill="#777" stroke="#919191" stroke-width="1"/><path d="M5.5 1.3 A4.2 4.2 0 0 1 5.5 9.7 Z" fill="#919191" transform="rotate(40 5.5 5.5)"/></g></svg>
<svg class="abs" style="left:955px;top:233.8px;" width="14" height="14" viewBox="0 0 14 14"><text x="7" y="10.6" text-anchor="middle" font-family="Liberation Serif, serif" font-size="10.5" fill="#919191">T</text></svg>
<svg class="abs" style="left:974.5px;top:235px;" width="12" height="12" viewBox="0 0 12 12"><g transform="translate(6.0 6.0) scale(0.75) translate(-6.0 -6.0)"><rect x="2" y="2" width="8" height="8" fill="none" stroke="#919191" stroke-width="1"/><rect x="0.6" y="0.6" width="2.6" height="2.6" fill="#919191"/><rect x="8.8" y="0.6" width="2.6" height="2.6" fill="#919191"/><rect x="0.6" y="8.8" width="2.6" height="2.6" fill="#919191"/><rect x="8.8" y="8.8" width="2.6" height="2.6" fill="#919191"/></g></svg>
<svg class="abs" style="left:992.5px;top:234.6px;" width="12" height="13" viewBox="0 0 12 13"><g transform="translate(6.0 6.5) scale(0.8) translate(-6.0 -6.5)"><path d="M2.6 1 L7.4 1 L10 3.6 L10 9.6 L2.6 9.6 Z" fill="none" stroke="#919191" stroke-width="1"/><rect x="0.8" y="6.4" width="5.6" height="5.4" fill="#6a6a6a" stroke="#919191" stroke-width="0.9"/></g></svg>
<div class="abs" style="left:1014.3px;top:235px;width:5px;height:11.4px;background:linear-gradient(#666 0 45%,#444 45% 100%);border:1px solid #3a3a3a;border-radius:1px;"></div>
<div class="abs" style="left:857px;top:251px;width:167px;height:1px;background:repeating-linear-gradient(90deg,#3c3c3c 0 1px,transparent 1px 2px);"></div>
<div class="abs" style="left:861px;top:255px;width:81.5px;height:13.5px;border:1px solid #474747;border-radius:3px;background:#606060;"></div>
<span class="abs t" style="left:866.0px;top:254.6px;height:14px;line-height:14px;font-size:8.5px;color:#8f8f8f;transform:scaleX(0.857);transform-origin:0 50%;">Normal</span>
<svg class="abs" style="left:935px;top:257.4px;" width="5" height="9" viewBox="0 0 5 9"><path d="M0.3 3.4 L2.5 0.8 L4.7 3.4 Z M0.3 5.4 L2.5 8 L4.7 5.4 Z" fill="#929292"/></svg>
<span class="abs t" style="left:948.8px;top:254.3px;height:14px;line-height:14px;font-size:8.5px;color:#a8a8a8;transform:scaleX(0.856);transform-origin:0 50%;">Opacity:</span>
<div class="abs" style="left:980.7px;top:255px;width:39px;height:13.5px;background:#505050;border:1px solid #464646;border-radius:2px;"></div>
<div class="abs" style="left:1007.4px;top:255px;width:12.3px;height:13.5px;background:#606060;border:1px solid #474747;border-radius:0 2px 2px 0;"></div>
<svg class="abs" style="left:1011px;top:260.2px;" width="5" height="4" viewBox="0 0 5 4"><path d="M0.2 0.4 L4.8 0.4 L2.5 3.4 Z" fill="#8c8c8c"/></svg>
<div class="abs" style="left:857px;top:272px;width:167px;height:1px;background:repeating-linear-gradient(90deg,#3c3c3c 0 1px,transparent 1px 2px);"></div>
<span class="abs t" style="left:861.6px;top:276.6px;height:14px;line-height:14px;font-size:8.5px;color:#a8a8a8;transform:scaleX(0.841);transform-origin:0 50%;">Lock:</span>
<svg class="abs" style="left:885.5px;top:278.5px;" width="10" height="10" viewBox="0 0 10 10"><rect x="0.6" y="0.6" width="8.8" height="8.8" fill="#686868" stroke="#8a8a8a" stroke-width="0.8"/><path d="M0.6 0.6 h2.9 v2.9 h-2.9 Z M6.5 0.6 h2.9 v2.9 h-2.9 Z M3.5 3.5 h3 v3 h-3 Z M0.6 6.5 h2.9 v2.9 h-2.9 Z M6.5 6.5 h2.9 v2.9 h-2.9 Z" fill="#8a8a8a"/></svg>
<svg class="abs" style="left:901px;top:277.5px;" width="12" height="12" viewBox="0 0 12 12"><path d="M10.6 0.8 L11.4 1.6 L5.6 8 L4.4 6.8 Z" fill="#8a8a8a"/><path d="M4 7.4 L5.2 8.6 C4.4 10.4 2.6 11 0.6 10.6 C2 9.8 2.2 8.2 4 7.4 Z" fill="#8a8a8a"/></svg>
<svg class="abs" style="left:917.5px;top:277.6px;" width="12" height="12" viewBox="0 0 12 12"><path d="M6 1 L6 11 M1 6 L11 6" stroke="#8a8a8a" stroke-width="1"/><path d="M4.4 2.6 L6 0.4 L7.6 2.6 Z M4.4 9.4 L6 11.6 L7.6 9.4 Z M2.6 4.4 L0.4 6 L2.6 7.6 Z M9.4 4.4 L11.6 6 L9.4 7.6 Z" fill="#8a8a8a"/></svg>
<svg class="abs" style="left:935.5px;top:277.4px;" width="10" height="12" viewBox="0 0 10 12"><path d="M2.6 5.4 L2.6 3.6 C2.6 0.6 7.4 0.6 7.4 3.6 L7.4 5.4" fill="none" stroke="#8a8a8a" stroke-width="1.1"/><rect x="1.2" y="5.2" width="7.6" height="5.8" rx="0.8" fill="#8a8a8a"/><rect x="4.3" y="7" width="1.4" height="2.2" fill="#555"/></svg>
<span class="abs t" style="left:965.7px;top:275.6px;height:14px;line-height:14px;font-size:8.5px;color:#a8a8a8;transform:scaleX(0.74);transform-origin:0 50%;">Fill:</span>
<div class="abs" style="left:980.7px;top:276px;width:39px;height:13.5px;background:#505050;border:1px solid #464646;border-radius:2px;"></div>
<div class="abs" style="left:1007.4px;top:276px;width:12.3px;height:13.5px;background:#606060;border:1px solid #474747;border-radius:0 2px 2px 0;"></div>
<svg class="abs" style="left:1011px;top:281.2px;" width="5" height="4" viewBox="0 0 5 4"><path d="M0.2 0.4 L4.8 0.4 L2.5 3.4 Z" fill="#8c8c8c"/></svg>
<div class="abs" style="left:857px;top:293.5px;width:167px;height:1px;background:repeating-linear-gradient(90deg,#3c3c3c 0 1px,transparent 1px 2px);"></div>
<div class="abs" style="left:857px;top:294.5px;width:157px;height:216.5px;background:#464646;"></div>
<div class="abs" style="left:1013.3px;top:294.5px;width:10.7px;height:216.5px;background:#505050;border-left:2px solid #3e3e3e;"></div>
<div class="abs" style="left:857px;top:511px;width:167px;height:0.8px;background:#3a3a3a;"></div>
<div class="abs" style="left:857px;top:511.8px;width:167px;height:0.7px;background:#626262;"></div>
<svg class="abs" style="left:870.4px;top:515.9px;" width="12" height="6" viewBox="0 0 12 6"><g transform="translate(6.0 3.0) scale(0.85) translate(-6.0 -3.0)"><rect x="0.6" y="0.8" width="5.8" height="4.4" rx="2.2" fill="none" stroke="#8e8e8e" stroke-width="1.1"/><rect x="5.6" y="0.8" width="5.8" height="4.4" rx="2.2" fill="none" stroke="#8e8e8e" stroke-width="1.1"/></g></svg>
<span class="abs t" style="left:893.3px;top:511.9px;height:14px;line-height:14px;font-size:9.5px;color:#8e8e8e;transform:scaleX(1.082);transform-origin:50% 50%;font-style:italic;font-family:'Liberation Serif',serif;">fx</span>
<svg class="abs" style="left:911px;top:514.4px;" width="12" height="9" viewBox="0 0 12 9"><g transform="translate(6.0 4.5) scale(0.85) translate(-6.0 -4.5)"><rect x="0.6" y="0.6" width="10.8" height="7.8" fill="#8a8a8a" stroke="#8e8e8e" stroke-width="1"/><circle cx="6" cy="4.5" r="2.4" fill="#535353"/></g></svg>
<svg class="abs" style="left:932px;top:513.9px;" width="11" height="11" viewBox="0 0 11 11"><g transform="translate(5.5 5.5) scale(0.82) translate(-5.5 -5.5)"><circle cx="5.5" cy="5.5" r="4.2" fill="#6d6d6d" stroke="#8e8e8e" stroke-width="1"/><path d="M5.5 1.3 A4.2 4.2 0 0 1 5.5 9.7 Z" fill="#8e8e8e" transform="rotate(40 5.5 5.5)"/></g></svg>
<svg class="abs" style="left:951.5px;top:514.4px;" width="12" height="9" viewBox="0 0 12 9"><g transform="translate(6.0 4.5) scale(0.88) translate(-6.0 -4.5)"><path d="M0.6 1 L4.6 1 L5.6 2.4 L11.4 2.4 L11.4 8.4 L0.6 8.4 Z" fill="#8e8e8e"/></g></svg>
<svg class="abs" style="left:972.5px;top:514.4px;" width="11" height="10" viewBox="0 0 11 10"><g transform="translate(5.5 5.0) scale(0.78) translate(-5.5 -5.0)"><path d="M0.6 0.6 L10.4 0.6 L10.4 6 L6.6 9.4 L0.6 9.4 Z" fill="#8a8a8a" stroke="#8e8e8e" stroke-width="1"/><path d="M6.6 9.4 L6.6 6 L10.4 6" fill="none" stroke="#8e8e8e" stroke-width="0.9"/></g></svg>
<svg class="abs" style="left:993px;top:513.9px;" width="10" height="11" viewBox="0 0 10 11"><path d="M1.6 3 L8.4 3 L7.8 10.4 L2.2 10.4 Z" fill="none" stroke="#8e8e8e" stroke-width="1" stroke-dasharray="1.4 0.6"/><path d="M0.6 2.2 L9.4 2.2 M3.6 0.8 L6.4 0.8" stroke="#8e8e8e" stroke-width="1.1"/><path d="M4 4.4 L4 9 M6 4.4 L6 9" stroke="#8e8e8e" stroke-width="0.7"/></svg>

<!-- watermark -->
<span class="abs t" style="left:791.0px;top:466.5px;height:20px;line-height:20px;font-size:15px;color:rgba(255,255,255,.34);">Activate Windows</span>
<span class="abs t" style="left:791.0px;top:487.3px;height:14px;line-height:14px;font-size:10.5px;color:rgba(255,255,255,.34);transform:scaleX(1.055);transform-origin:0 50%;">Go to PC settings to activate Windows.</span>

<!-- New dialog -->
<div class="abs" style="left:303px;top:69px;width:416px;height:263px;background:#fff;border:1px solid #1b1b1b;"></div>
<div class="abs" style="left:309px;top:92.5px;width:403px;height:232.5px;background:#ededed;border:1px solid #e0e3e6;"></div>
<span class="abs t" style="left:499.1px;top:73.2px;height:16px;line-height:16px;font-size:11.5px;color:#2a2a2a;transform:scaleX(0.934);transform-origin:50% 50%;">New</span>
<div class="abs" style="left:689px;top:70.5px;width:23.5px;height:15px;background:#c8484e;"></div>
<svg class="abs" style="left:697px;top:74.5px;" width="9" height="8" viewBox="0 0 9 8"><path d="M1.6 1 L7 7 M7 1 L1.6 7" stroke="#fff" stroke-width="1.3" fill="none"/></svg>
<div class="abs" style="left:318px;top:125px;width:291px;height:191px;border:1px solid #bcbcbc;box-shadow:inset 1px 1px 0 #fbfbfb,1px 1px 0 #fbfbfb;"></div>
<div class="abs" style="left:329px;top:124px;width:238px;height:4px;background:#ededed;"></div>
<span class="abs t" style="left:396.0px;top:102.0px;height:14px;line-height:14px;font-size:10px;color:#151515;transform:scaleX(0.862);transform-origin:100% 50%;">Name:</span>
<div class="abs" style="left:429px;top:101px;width:182px;height:15px;background:#fff;border:1px solid #62a6ea;"></div>
<div class="abs" style="left:432.5px;top:103px;width:42.5px;height:11px;background:#3890ea;"></div>
<span class="abs t" style="left:434.0px;top:102.1px;height:14px;line-height:14px;font-size:10px;color:#fff;transform:scaleX(0.934);transform-origin:0 50%;">Untitled-1</span>
<span class="abs t" style="left:339.8px;top:121.8px;height:14px;line-height:14px;font-size:10px;color:#151515;transform:scaleX(0.915);transform-origin:100% 50%;">Preset:</span>
<div class="abs" style="left:374.5px;top:119px;width:188.5px;height:17.5px;background:#fff;border:1px solid #bababa;"></div>
<span class="abs t" style="left:380.0px;top:121.5px;height:14px;line-height:14px;font-size:10px;color:#151515;transform:scaleX(0.834);transform-origin:0 50%;">Clipboard</span>
<svg class="abs" style="left:553px;top:125.5px;" width="7" height="6" viewBox="0 0 7 6"><path d="M0.6 1.2 L3.5 4.4 L6.4 1.2" stroke="#3a3a3a" stroke-width="1.3" fill="none"/></svg>
<span class="abs t" style="left:403.3px;top:144.7px;height:14px;line-height:14px;font-size:10px;color:#a8a8a8;transform:scaleX(0.832);transform-origin:100% 50%;">Size:</span>
<div class="abs" style="left:429px;top:143.5px;width:174px;height:16px;background:#ebebeb;border:1px solid #dadada;"></div>
<div class="abs" style="left:589.5px;top:144.5px;width:12.5px;height:14px;background:#f7f7f7;"></div>
<svg class="abs" style="left:593px;top:149px;" width="7" height="6" viewBox="0 0 7 6"><path d="M0.6 1.2 L3.5 4.4 L6.4 1.2" stroke="#b8b8b8" stroke-width="1.3" fill="none"/></svg>
<span class="abs t" style="left:397.2px;top:167.6px;height:14px;line-height:14px;font-size:10px;color:#151515;transform:scaleX(0.942);transform-origin:100% 50%;">Width:</span>
<div class="abs" style="left:429px;top:166.3px;width:73.5px;height:15.6px;background:#fff;border:1px solid #bababa;"></div>
<span class="abs t" style="left:434.5px;top:168.0px;height:14px;line-height:14px;font-size:10px;color:#151515;transform:scaleX(0.885);transform-origin:0 50%;">1366</span>
<div class="abs" style="left:506px;top:166.3px;width:97px;height:15.6px;background:#fff;border:1px solid #bababa;"></div>
<span class="abs t" style="left:511.0px;top:168.0px;height:14px;line-height:14px;font-size:10px;color:#151515;transform:scaleX(0.824);transform-origin:0 50%;">Pixels</span>
<svg class="abs" style="left:593px;top:171.8px;" width="7" height="6" viewBox="0 0 7 6"><path d="M0.6 1.2 L3.5 4.4 L6.4 1.2" stroke="#3a3a3a" stroke-width="1.3" fill="none"/></svg>
<span class="abs t" style="left:393.8px;top:190.0px;height:14px;line-height:14px;font-size:10px;color:#151515;transform:scaleX(0.931);transform-origin:100% 50%;">Height:</span>
<div class="abs" style="left:429px;top:188.7px;width:73.5px;height:15.6px;background:#fff;border:1px solid #bababa;"></div>
<span class="abs t" style="left:434.5px;top:190.4px;height:14px;line-height:14px;font-size:10px;color:#151515;transform:scaleX(0.899);transform-origin:0 50%;">768</span>
<div class="abs" style="left:506px;top:188.7px;width:97px;height:15.6px;background:#fff;border:1px solid #bababa;"></div>
<span class="abs t" style="left:511.0px;top:190.4px;height:14px;line-height:14px;font-size:10px;color:#151515;transform:scaleX(0.824);transform-origin:0 50%;">Pixels</span>
<svg class="abs" style="left:593px;top:194.2px;" width="7" height="6" viewBox="0 0 7 6"><path d="M0.6 1.2 L3.5 4.4 L6.4 1.2" stroke="#3a3a3a" stroke-width="1.3" fill="none"/></svg>
<span class="abs t" style="left:375.5px;top:212.3px;height:14px;line-height:14px;font-size:10px;color:#151515;transform:scaleX(0.885);transform-origin:100% 50%;">Resolution:</span>
<div class="abs" style="left:429px;top:211px;width:73.5px;height:15.6px;background:#fff;border:1px solid #bababa;"></div>
<span class="abs t" style="left:434.5px;top:212.7px;height:14px;line-height:14px;font-size:10px;color:#151515;transform:scaleX(0.845);transform-origin:0 50%;">72</span>
<div class="abs" style="left:506px;top:211px;width:97px;height:15.6px;background:#fff;border:1px solid #bababa;"></div>
<span class="abs t" style="left:511.0px;top:212.7px;height:14px;line-height:14px;font-size:10px;color:#151515;transform:scaleX(0.9);transform-origin:0 50%;">Pixels/Inch</span>
<svg class="abs" style="left:593px;top:216.5px;" width="7" height="6" viewBox="0 0 7 6"><path d="M0.6 1.2 L3.5 4.4 L6.4 1.2" stroke="#3a3a3a" stroke-width="1.3" fill="none"/></svg>
<span class="abs t" style="left:371.0px;top:234.8px;height:14px;line-height:14px;font-size:10px;color:#151515;transform:scaleX(0.881);transform-origin:100% 50%;">Color Mode:</span>
<div class="abs" style="left:429px;top:233.5px;width:71.5px;height:15.6px;background:#fff;border:1px solid #bababa;"></div>
<span class="abs t" style="left:434.5px;top:235.2px;height:14px;line-height:14px;font-size:10px;color:#151515;transform:scaleX(0.823);transform-origin:0 50%;">RGB Color</span>
<svg class="abs" style="left:489.5px;top:239.0px;" width="7" height="6" viewBox="0 0 7 6"><path d="M0.6 1.2 L3.5 4.4 L6.4 1.2" stroke="#3a3a3a" stroke-width="1.3" fill="none"/></svg>
<div class="abs" style="left:506px;top:233.5px;width:97px;height:15.6px;background:#fff;border:1px solid #bababa;"></div>
<span class="abs t" style="left:511.5px;top:235.2px;height:14px;line-height:14px;font-size:10px;color:#151515;">8 bit</span>
<svg class="abs" style="left:593px;top:239.0px;" width="7" height="6" viewBox="0 0 7 6"><path d="M0.6 1.2 L3.5 4.4 L6.4 1.2" stroke="#3a3a3a" stroke-width="1.3" fill="none"/></svg>
<span class="abs t" style="left:326.5px;top:257.8px;height:14px;line-height:14px;font-size:10px;color:#151515;transform:scaleX(0.92);transform-origin:100% 50%;">Background Contents:</span>
<div class="abs" style="left:429px;top:256.5px;width:174px;height:16px;background:#fff;border:1px solid #bababa;"></div>
<span class="abs t" style="left:434.5px;top:258.4px;height:14px;line-height:14px;font-size:10px;color:#151515;transform:scaleX(0.947);transform-origin:0 50%;">White</span>
<svg class="abs" style="left:593px;top:262.0px;" width="7" height="6" viewBox="0 0 7 6"><path d="M0.6 1.2 L3.5 4.4 L6.4 1.2" stroke="#3a3a3a" stroke-width="1.3" fill="none"/></svg>
<div class="abs" style="left:334px;top:287.5px;width:12px;height:12px;border-radius:6px;border:1px solid #b4b4b4;background:linear-gradient(#ffffff,#dadada);"></div>
<svg class="abs" style="left:337px;top:290px;" width="6" height="7" viewBox="0 0 6 7"><path d="M0.8 0.8 L3 2.8 L5.2 0.8 M0.8 3.8 L3 5.8 L5.2 3.8" stroke="#222" stroke-width="1.1" fill="none"/></svg>
<span class="abs t" style="left:351.0px;top:287.1px;height:14px;line-height:14px;font-size:10px;color:#151515;transform:scaleX(0.904);transform-origin:0 50%;">Advanced</span>
<div class="abs" style="left:395px;top:293px;width:201px;height:1px;background:#bcbcbc;"></div>
<div class="abs" style="left:623px;top:101px;width:81px;height:14.5px;border:1px solid #58a4ec;background:linear-gradient(#f4f4f4 0%,#ececec 45%,#e1e1e1 55%,#d8d8d8 100%);box-shadow:inset 0 0 0 1px #c4e2fb;"></div><span class="abs t" style="left:656.3px;top:102.2px;height:14px;line-height:14px;font-size:10px;color:#151515;transform:scaleX(0.796);transform-origin:50% 50%;">OK</span>
<div class="abs" style="left:623px;top:122.5px;width:81px;height:14px;border:1px solid #acacac;background:linear-gradient(#f4f4f4 0%,#ececec 45%,#e1e1e1 55%,#d8d8d8 100%);"></div><span class="abs t" style="left:647.9px;top:123.4px;height:14px;line-height:14px;font-size:10px;color:#151515;transform:scaleX(0.883);transform-origin:50% 50%;">Cancel</span>
<div class="abs" style="left:623px;top:144px;width:81px;height:13.5px;border:1px solid #acacac;background:linear-gradient(#f4f4f4 0%,#ececec 45%,#e1e1e1 55%,#d8d8d8 100%);"></div><span class="abs t" style="left:632.1px;top:144.6px;height:14px;line-height:14px;font-size:10px;color:#151515;transform:scaleX(0.914);transform-origin:50% 50%;">Save Preset...</span>
<div class="abs" style="left:623px;top:165px;width:81px;height:13.5px;border:1px solid #d2d2d2;background:#efefef;"></div><span class="abs t" style="left:629.0px;top:165.6px;height:14px;line-height:14px;font-size:10px;color:#a3a3a3;transform:scaleX(0.952);transform-origin:50% 50%;">Delete Preset...</span>
<span class="abs t" style="left:634.6px;top:265.9px;height:14px;line-height:14px;font-size:10px;color:#151515;transform:scaleX(0.886);transform-origin:50% 50%;">Image Size:</span>
<span class="abs t" style="left:648.7px;top:284.2px;height:14px;line-height:14px;font-size:10px;color:#151515;transform:scaleX(0.914);transform-origin:50% 50%;">3.00M</span>
</body>
</html>
